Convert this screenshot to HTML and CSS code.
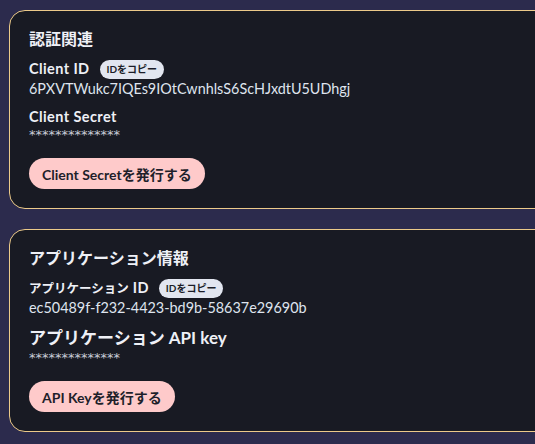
FILE: index.html
```html
<!DOCTYPE html>
<html lang="ja">
<head>
<meta charset="utf-8">
<link rel="stylesheet" href="styles.css">
</head>
<body>
<div class="page">
  <section class="card">
    <h2 class="title">認証関連</h2>
    <div class="label-row">
      <span class="label latin">Client ID</span>
      <button class="badge">IDをコピー</button>
    </div>
    <div class="value">6PXVTWukc7IQEs9IOtCwnhlsS6ScHJxdtU5UDhgj</div>
    <div class="label latin secret-label">Client Secret</div>
    <div class="mask">**************</div>
    <button class="action">Client Secretを発行する</button>
  </section>
  <section class="card">
    <h2 class="title">アプリケーション情報</h2>
    <div class="label-row">
      <span class="label latin"><span class="jp">アプリケーション</span> ID</span>
      <button class="badge">IDをコピー</button>
    </div>
    <div class="value">ec50489f-f232-4423-bd9b-58637e29690b</div>
    <div class="label label-lg">アプリケーション API key</div>
    <div class="mask">**************</div>
    <button class="action">API Keyを発行する</button>
  </section>
</div>
</body>
</html>
```
FILE: styles.css
```css
* { box-sizing: border-box; }
html, body { margin: 0; padding: 0; }
body {
  background: #2c2b4d;
  font-family: Lato, "Noto Sans CJK JP", sans-serif;
  color: #e3e7f0;
  overflow: hidden;
  width: 535px;
  height: 444px;
}
.page {
  padding: 10px 0 0 9px;
  display: flex;
  flex-direction: column;
  gap: 20px;
}
.card {
  width: 600px;
  background: #181a23;
  border: 1px solid #ecca8a;
  border-radius: 16px;
  padding: 16px 19px 19px;
  display: flex;
  flex-direction: column;
  align-items: flex-start;
}
.title {
  margin: 0;
  font-size: 16px;
  line-height: 24px;
  font-weight: 700;
  color: #eef0f6;
}
.label-row {
  margin-top: 8px;
  display: flex;
  align-items: center;
  gap: 10px;
  height: 20px;
}
.label {
  font-size: 14px;
  line-height: 20px;
  font-weight: 700;
  color: #eef0f6;
}
.latin {
  font-size: 14.5px;
  letter-spacing: 0.4px;
}
.jp {
  font-size: 12.5px;
  letter-spacing: 0;
}
.secret-label { margin-top: 8px; }
.label-lg {
  margin-top: 8px;
  font-size: 17px;
  line-height: 24px;
}
.badge {
  font-family: inherit;
  border: none;
  background: #e2e6f0;
  color: #1b1d28;
  font-size: 10px;
  font-weight: 700;
  line-height: 19px;
  height: 19px;
  padding: 0 7px;
  border-radius: 10px;
}
.value {
  font-size: 14.4px;
  line-height: 20px;
  color: #dfe4ee;
}
.mask {
  font-family: "DejaVu Sans", sans-serif;
  font-size: 13px;
  line-height: 16px;
  height: 18px;
  color: #c8cdd8;
}
.action {
  margin-top: 13px;
  font-family: inherit;
  border: none;
  background: #fecaca;
  color: #1e1f2a;
  font-size: 14px;
  font-weight: 700;
  height: 31px;
  padding: 0 13px;
  border-radius: 16px;
}
```
